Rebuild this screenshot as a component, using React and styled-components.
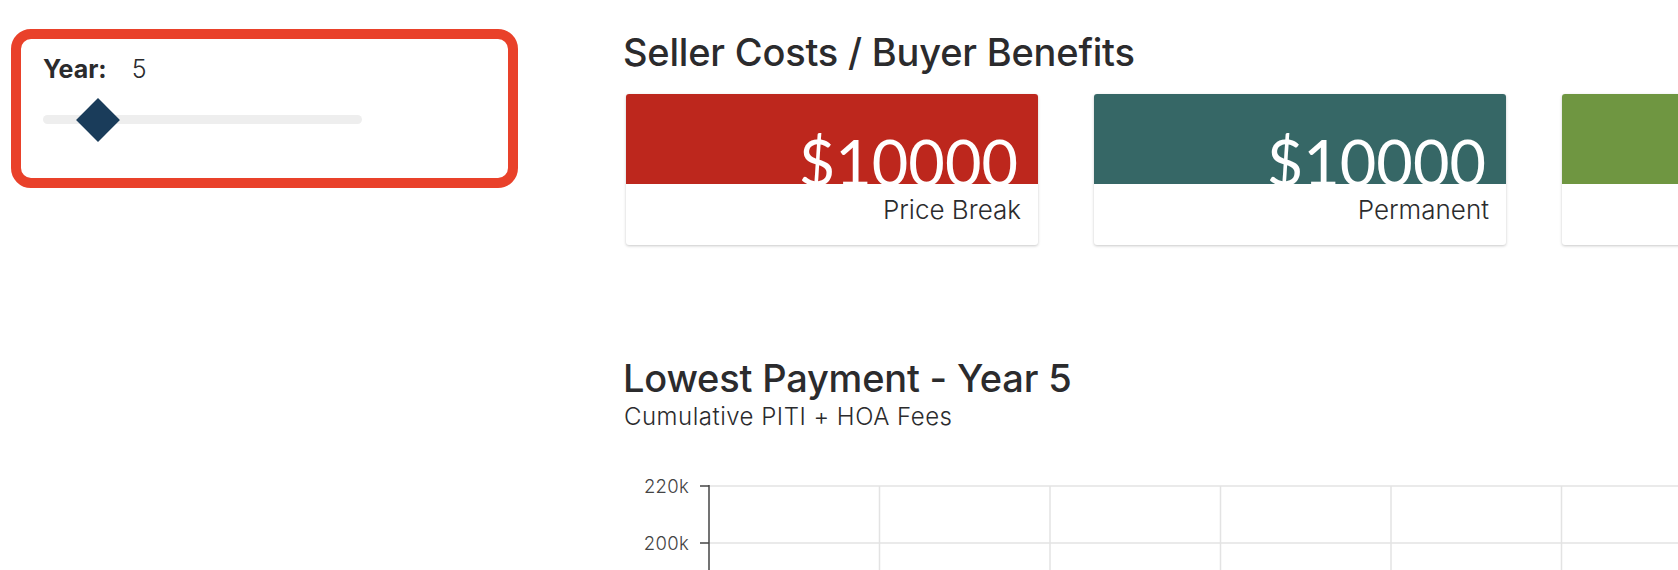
import React from "react";
import styled, { createGlobalStyle } from "styled-components";

const GlobalStyle = createGlobalStyle`
  html, body {
    margin: 0;
    padding: 0;
    background: #ffffff;
    overflow: hidden;
  }
  body {
    font-family: "Inter", "Liberation Sans", sans-serif;
    color: #2b2b2d;
  }
`;

const Page = styled.div`
  display: flex;
  width: 1678px;
  height: 570px;
  overflow: hidden;
`;

const Sidebar = styled.aside`
  flex: 0 0 626px;
  padding: 29px 0 0 11px;
  box-sizing: border-box;
`;

const YearBox = styled.div`
  width: 507px;
  height: 159px;
  box-sizing: border-box;
  border: 10px solid #e9412a;
  border-radius: 20px;
  padding: 14px 22px;
`;

const YearRow = styled.div`
  display: flex;
  align-items: baseline;
  gap: 25px;
  font-size: 25px;
  line-height: 33px;
`;

const YearLabel = styled.span`
  font-family: "Inter", sans-serif;
  font-weight: 700;
  color: #2b2b2d;
`;

const YearValue = styled.span`
  font-family: "Inter", sans-serif;
  font-weight: 300;
  color: #2b2b2d;
`;

const Track = styled.div`
  position: relative;
  width: 319px;
  height: 9px;
  margin-top: 29px;
  border-radius: 5px;
  background: #eeeeee;
`;

const Thumb = styled.div`
  position: absolute;
  top: 50%;
  width: 31px;
  height: 31px;
  background: #1a3c5a;
  transform: translate(-50%, -50%) rotate(45deg);
`;

const Main = styled.main`
  flex: 1 0 auto;
  padding-top: 29px;
`;

const SectionTitle = styled.h2`
  margin: 0 0 0 -3px;
  font-family: "Inter", sans-serif;
  font-weight: 500;
  font-size: 38px;
  line-height: 46px;
  color: #2b2b2d;
  letter-spacing: -0.2px;
`;

const CardRow = styled.div`
  display: flex;
  gap: 56px;
  margin-top: 19px;
`;

const Card = styled.div`
  flex: 0 0 412px;
  height: 151px;
  border-radius: 3px;
  background: #ffffff;
  box-shadow: 0 1px 3px rgba(0, 0, 0, 0.22);
  overflow: hidden;
`;

const CardBand = styled.div`
  height: 90px;
  box-sizing: border-box;
  padding: 36px 20px 0 0;
  background: ${(p) => p.$color};
  overflow: hidden;
  text-align: right;
  font-family: "Lato", sans-serif;
  font-size: 63px;
  line-height: 1;
  color: #ffffff;
`;

const CardLabel = styled.div`
  padding: 10px 17px 0 0;
  text-align: right;
  font-family: "Inter", sans-serif;
  font-weight: 300;
  font-size: 26px;
  line-height: 31px;
  color: #2b2b2d;
`;

const ChartHead = styled.div`
  margin-top: 110px;
`;

const Subtitle = styled.div`
  margin-top: 2px;
  margin-left: -2px;
  font-family: "Inter", sans-serif;
  font-weight: 300;
  font-size: 24px;
  line-height: 28px;
  letter-spacing: 0.5px;
  color: #2b2b2d;
`;

const ChartBox = styled.div`
  margin-top: 37px;
  margin-left: -6px;
`;

const cards = [
  { amount: "$10000", label: "Price Break", color: "#bd271d" },
  { amount: "$10000", label: "Permanent", color: "#366766" },
  { amount: "$10000", label: "Buydown", color: "#6f9641" },
];

function Chart() {
  const axisX = 89;
  const rows = [
    { y: 18, label: "220k" },
    { y: 75, label: "200k" },
  ];
  const cols = [0, 1, 2, 3, 4, 5, 6].map((i) => axisX + i * 170.5);
  return (
    <svg width="1100" height="124" viewBox="0 0 1100 124">
      {cols.slice(1).map((x) => (
        <line key={x} x1={x} y1={18} x2={x} y2={124} stroke="#e3e3e3" strokeWidth="1.5" />
      ))}
      {rows.map((r) => (
        <g key={r.label}>
          <line x1={axisX} y1={r.y} x2={1100} y2={r.y} stroke="#e3e3e3" strokeWidth="1.5" />
          <line x1={axisX - 9} y1={r.y} x2={axisX} y2={r.y} stroke="#444" strokeWidth="1.5" />
          <text
            x={axisX - 20}
            y={r.y + 7}
            textAnchor="end"
            fontFamily="Inter, sans-serif"
            fontWeight="300"
            fontSize="18.5"
            letterSpacing="0.3"
            fill="#444"
          >
            {r.label}
          </text>
        </g>
      ))}
      <line x1={axisX} y1={17} x2={axisX} y2={124} stroke="#444" strokeWidth="1.5" />
    </svg>
  );
}

export default function App() {
  const year = 5;
  const thumbLeft = 55 + (year - 5) * 10;
  return (
    <>
      <GlobalStyle />
      <Page>
        <Sidebar>
          <YearBox>
            <YearRow>
              <YearLabel>Year:</YearLabel>
              <YearValue>{year}</YearValue>
            </YearRow>
            <Track>
              <Thumb style={{ left: thumbLeft }} />
            </Track>
          </YearBox>
        </Sidebar>
        <Main>
          <SectionTitle>Seller Costs / Buyer Benefits</SectionTitle>
          <CardRow>
            {cards.map((c) => (
              <Card key={c.label}>
                <CardBand $color={c.color}>{c.amount}</CardBand>
                <CardLabel>{c.label}</CardLabel>
              </Card>
            ))}
          </CardRow>
          <ChartHead>
            <SectionTitle>Lowest Payment - Year {year}</SectionTitle>
            <Subtitle>Cumulative PITI + HOA Fees</Subtitle>
          </ChartHead>
          <ChartBox>
            <Chart />
          </ChartBox>
        </Main>
      </Page>
    </>
  );
}
